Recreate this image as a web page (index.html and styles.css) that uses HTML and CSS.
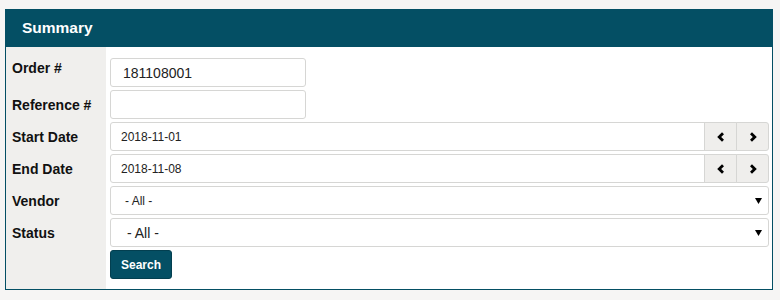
FILE: index.html
```html
<!DOCTYPE html>
<html>
<head>
<meta charset="utf-8">
<link rel="stylesheet" href="styles.css">
</head>
<body>
<div class="panel">
  <div class="panel-header">Summary</div>
  <div class="panel-body">
    <div class="labels">
      <div class="label label-top">Order #</div>
      <div class="label">Reference #</div>
      <div class="label">Start Date</div>
      <div class="label">End Date</div>
      <div class="label">Vendor</div>
      <div class="label">Status</div>
    </div>
    <div class="fields">
      <input class="input input-short input-lg" type="text" value="181108001">
      <input class="input input-short" type="text" value="">
      <div class="date-group">
        <input class="input input-date" type="text" value="2018-11-01">
        <button class="nav-btn" type="button"><svg width="8" height="10" viewBox="0 0 8 10"><polyline points="6,1.2 2.2,5 6,8.8" fill="none" stroke="#000" stroke-width="2.8"/></svg></button>
        <button class="nav-btn" type="button"><svg width="8" height="10" viewBox="0 0 8 10"><polyline points="2,1.2 5.8,5 2,8.8" fill="none" stroke="#000" stroke-width="2.8"/></svg></button>
      </div>
      <div class="date-group">
        <input class="input input-date" type="text" value="2018-11-08">
        <button class="nav-btn" type="button"><svg width="8" height="10" viewBox="0 0 8 10"><polyline points="6,1.2 2.2,5 6,8.8" fill="none" stroke="#000" stroke-width="2.8"/></svg></button>
        <button class="nav-btn" type="button"><svg width="8" height="10" viewBox="0 0 8 10"><polyline points="2,1.2 5.8,5 2,8.8" fill="none" stroke="#000" stroke-width="2.8"/></svg></button>
      </div>
      <div class="select select-sm"><span>- All -</span><svg class="caret" width="7" height="6" viewBox="0 0 7 6"><polygon points="0,0 7,0 3.5,6" fill="#000"/></svg></div>
      <div class="select select-lg"><span>- All -</span><svg class="caret" width="7" height="6" viewBox="0 0 7 6"><polygon points="0,0 7,0 3.5,6" fill="#000"/></svg></div>
      <div><button class="search-btn" type="button">Search</button></div>
    </div>
  </div>
</div>
</body>
</html>
```

FILE: styles.css
```css
* { box-sizing: border-box; }
body {
  margin: 0;
  background: #f6f5f4;
  font-family: "Liberation Sans", Arial, sans-serif;
}
.panel {
  margin: 9px 0 0 5px;
  width: 768px;
  border: 1px solid #044f64;
  background: #fff;
}
.panel-header {
  height: 38px;
  margin: -1px -1px 0 -1px;
  background: #044f64;
  color: #fff;
  font-weight: bold;
  font-size: 15.5px;
  display: flex;
  align-items: center;
  padding-left: 17px;
}
.panel-body {
  display: flex;
}
.labels {
  width: 100px;
  background: #f0efed;
  padding: 11px 0 10px 6px;
  display: flex;
  flex-direction: column;
  gap: 3px;
}
.label {
  height: 29px;
  display: flex;
  align-items: center;
  font-weight: bold;
  font-size: 14px;
  color: #111;
}
.label-top {
  align-items: flex-start;
  padding-top: 2px;
}
.fields {
  flex: 1;
  padding: 11px 3px 10px 4px;
  display: flex;
  flex-direction: column;
  gap: 3px;
}
.input {
  height: 29px;
  border: 1px solid #d6d6d4;
  border-radius: 3px;
  font-family: inherit;
  color: #222;
  background: #fff;
  outline: none;
  margin: 0;
}
.input-short {
  width: 196px;
  font-size: 14px;
  padding: 0 12px;
}
.input-lg { font-size: 14px; }
.date-group {
  display: flex;
  height: 29px;
}
.input-date {
  flex: 1;
  font-size: 12px;
  padding: 0 10px;
  border-radius: 3px 0 0 3px;
}
.nav-btn {
  width: 33px;
  height: 29px;
  margin: 0 0 0 -1px;
  padding: 0;
  background: #efeeec;
  border: 1px solid #d6d6d4;
  display: flex;
  align-items: center;
  justify-content: center;
}
.nav-btn:last-child { border-radius: 0 3px 3px 0; }
.select {
  height: 29px;
  border: 1px solid #d6d6d4;
  border-radius: 3px;
  display: flex;
  align-items: center;
  justify-content: space-between;
  color: #222;
  padding-right: 6px;
}
.select-sm { font-size: 12px; padding-left: 14px; }
.select-lg { font-size: 14px; padding-left: 16px; }
.caret { display: block; }
.search-btn {
  width: 62px;
  height: 29px;
  background: #044f64;
  border: 1px solid #033f50;
  border-radius: 3px;
  color: #fff;
  font-family: inherit;
  font-weight: bold;
  font-size: 12px;
  padding: 0;
}
```
